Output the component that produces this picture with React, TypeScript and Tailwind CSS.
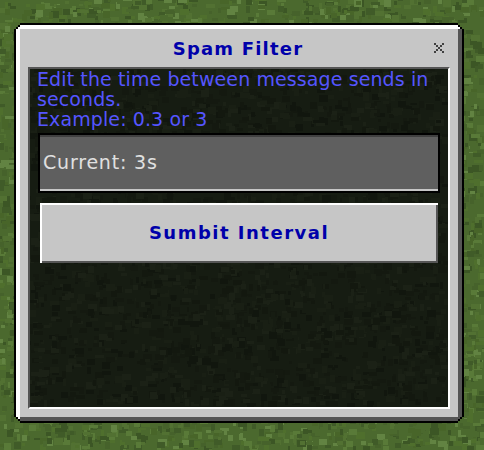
const GRASS = ['#405b28', '#46622b', '#4b692e', '#4b692e', '#527132', '#4f6f2d', '#597a38', '#486529', '#628342', '#3c5625'];
const DARK = ['#11160e', '#141910', '#161c12', '#191f14', '#13180f', '#1b2116'];

// seeded noise so the texture stays the same between runs
function makeRandom(seed: number) {
	let a = seed;
	return () => {
		a = (a + 0x6d2b79f5) | 0;
		let t = Math.imul(a ^ (a >>> 15), 1 | a);
		t = (t + Math.imul(t ^ (t >>> 7), 61 | t)) ^ t;
		return ((t ^ (t >>> 14)) >>> 0) / 4294967296;
	};
}

function Texture({ colors, width, height, count, seed }: { colors: string[]; width: number; height: number; count: number; seed: number }) {
	const rand = makeRandom(seed);
	const blots = Array.from({ length: count }, () => ({
		x: Math.floor(rand() * width) - 3,
		y: Math.floor(rand() * height) - 3,
		w: 3 + Math.floor(rand() * 7),
		h: 3 + Math.floor(rand() * 5),
		fill: colors[Math.floor(rand() * colors.length)],
	}));
	return (
		<svg className="absolute inset-0" width={width} height={height} shapeRendering="crispEdges" aria-hidden="true">
			<rect width={width} height={height} fill={colors[2]} />
			{blots.map((b, i) => (
				<rect key={i} x={b.x} y={b.y} width={b.w} height={b.h} fill={b.fill} />
			))}
		</svg>
	);
}

function CloseIcon() {
	return (
		<svg width="10" height="10" viewBox="0 0 10 10" shapeRendering="crispEdges" aria-hidden="true">
			<path d="M0 0h2v2H0zM8 0h2v2H8zM2 2h2v2H2zM6 2h2v2H6zM4 4h2v2H4zM2 6h2v2H2zM6 6h2v2H6zM0 8h2v2H0zM8 8h2v2H8z" fill="#404040" />
		</svg>
	);
}

// stepped pixel corner of the window frame
function Corner({ className }: { className: string }) {
	return (
		<svg className={`absolute ${className}`} width="6" height="6" viewBox="0 0 6 6" shapeRendering="crispEdges" aria-hidden="true">
			<path d="M0 0h6v2H4v2H2v2H0z" fill="#4b692e" />
			<path d="M4 2h2v2H4zM2 4h2v2H2z" fill="#000000" />
		</svg>
	);
}

export default function App() {
	return (
		<div className="relative h-[450px] w-[484px] overflow-hidden pl-[14px] pt-[23px] font-['DejaVu_Sans',sans-serif]">
			<Texture colors={GRASS} width={484} height={450} count={7000} seed={7} />
			<div className="relative h-[400px] w-[450px] border-2 border-black bg-[#c6c6c6] shadow-[inset_4px_4px_0_#ffffff,inset_-4px_-4px_0_#555555]">
				<Corner className="-left-[2px] -top-[2px]" />
				<Corner className="-right-[2px] -top-[2px] rotate-90" />
				<Corner className="-bottom-[2px] -right-[2px] rotate-180" />
				<Corner className="-bottom-[2px] -left-[2px] -rotate-90" />
				<div className="grid h-[42px] grid-cols-[1fr_auto_1fr] items-center pl-[16px] pr-[18px] pt-[4px]">
					<span />
					<h1 className="text-[18px] font-bold tracking-[1.2px] text-[#0000aa]">Spam Filter</h1>
					<div className="flex justify-end">
						<CloseIcon />
					</div>
				</div>
				<div className="relative ml-[12px] h-[342px] w-[422px] overflow-hidden border-2 border-b-white border-l-[#555555] border-r-white border-t-[#555555]">
					<Texture colors={DARK} width={418} height={338} count={3500} seed={21} />
					<div className="relative flex flex-col px-[7px]">
						<p className="w-[404px] text-[19px] leading-[20px] tracking-[0.1px] text-[#5555ff]">
							Edit the time between message sends in seconds.
							<br />
							Example: 0.3 or 3
						</p>
						<div className="ml-[1px] mt-[4px] flex h-[60px] w-[402px] items-center border-2 border-black bg-[#5f5f5f] pb-[2px] pl-[3px] shadow-[inset_0_2px_0_#404040,inset_0_-2px_0_#c6c6c6]">
							<span className="text-[19px] tracking-[0.8px] text-[#e0e0e0]">Current: 3s</span>
						</div>
						<button className="ml-[3px] mt-[10px] flex h-[60px] w-[398px] items-center justify-center bg-[#c6c6c6] pb-[2px] text-[18px] font-bold tracking-[1.5px] text-[#0000aa] shadow-[inset_2px_2px_0_#ffffff,inset_-2px_-2px_0_#555555]">
							Sumbit Interval
						</button>
					</div>
				</div>
			</div>
		</div>
	);
}
